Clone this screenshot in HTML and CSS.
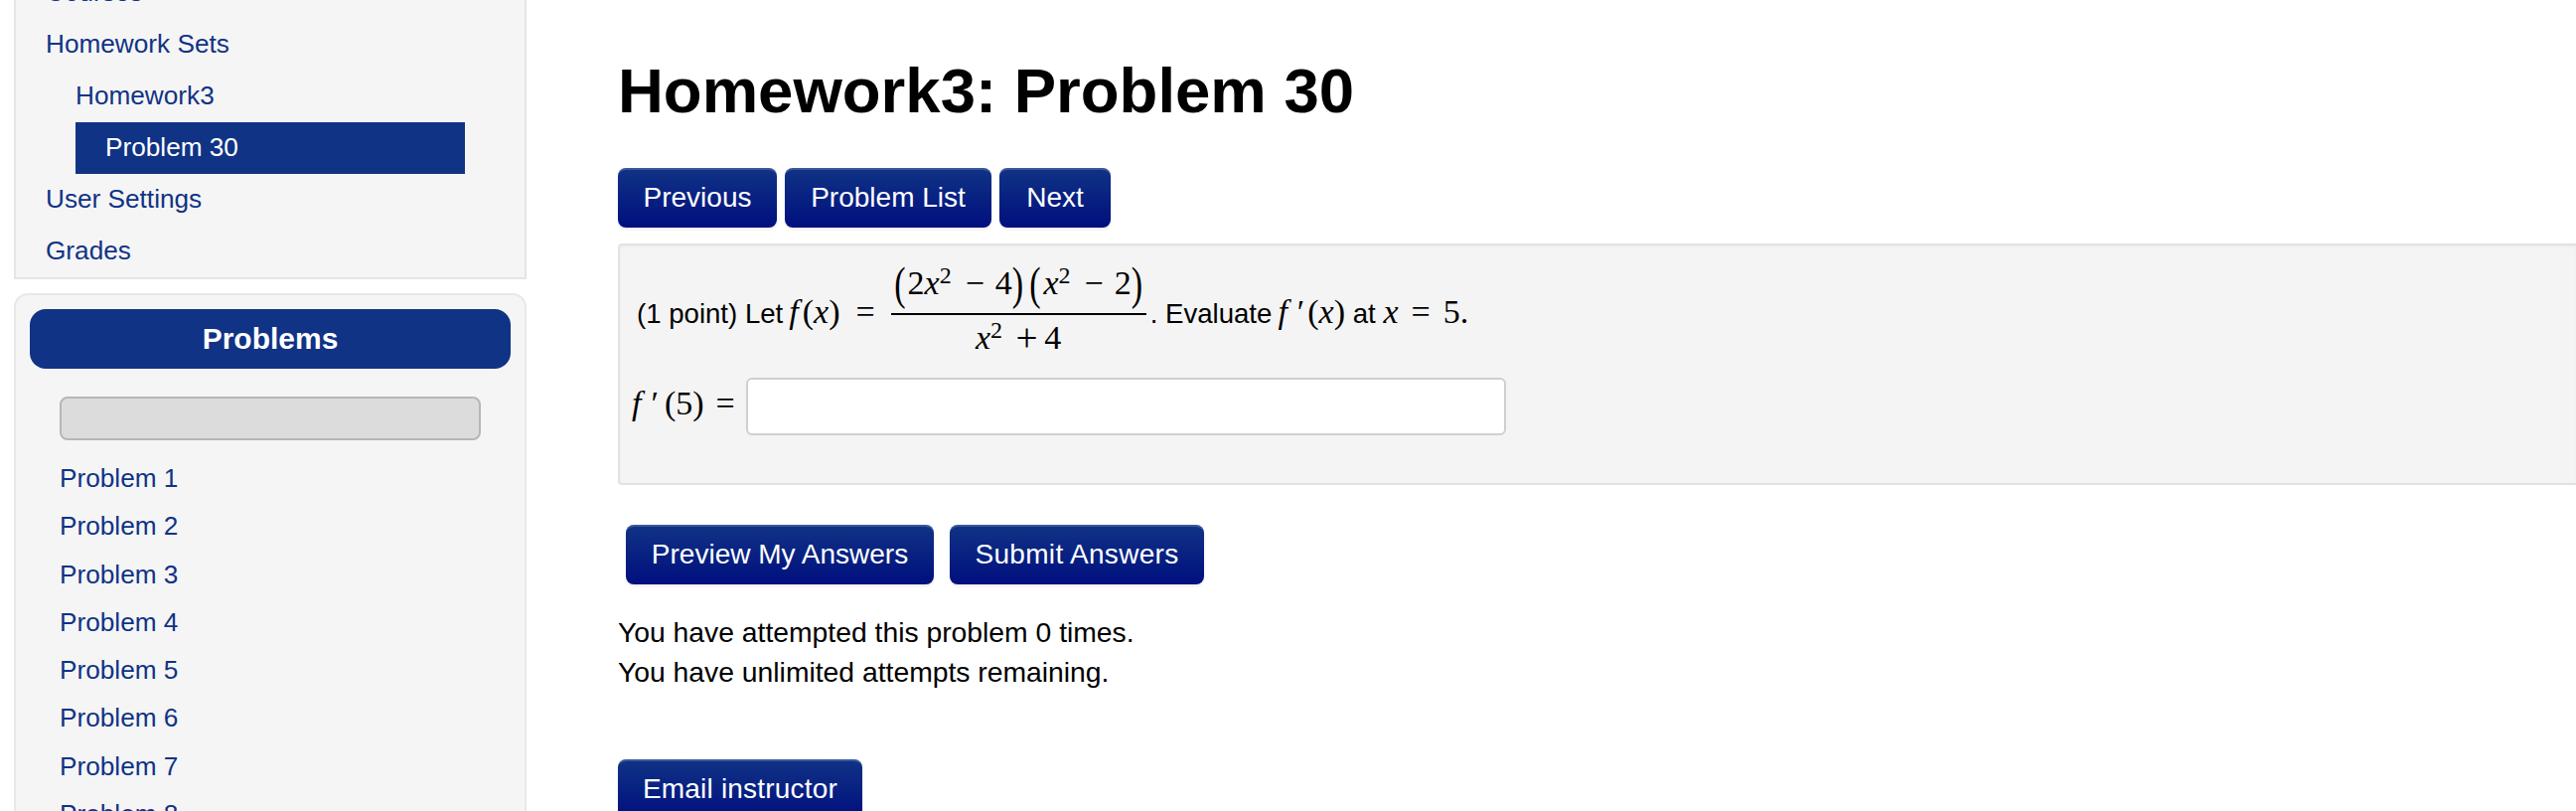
FILE: index.html
```html
<!DOCTYPE html>
<html lang="en">
<head>
<meta charset="utf-8">
<title>Homework3: Problem 30</title>
<link rel="stylesheet" href="styles.css">
</head>
<body>
<div class="page">
  <aside class="sidebar">
    <nav class="site-nav">
      <a class="nav-link" href="#">Courses</a>
      <a class="nav-link" href="#">Homework Sets</a>
      <a class="nav-link nav-sub" href="#">Homework3</a>
      <a class="nav-link nav-sub nav-active" href="#">Problem 30</a>
      <a class="nav-link" href="#">User Settings</a>
      <a class="nav-link" href="#">Grades</a>
    </nav>
    <section class="problems">
      <h2 class="problems-title">Problems</h2>
      <div class="progress"></div>
      <ul class="problem-list">
        <li><a href="#">Problem 1</a></li>
        <li><a href="#">Problem 2</a></li>
        <li><a href="#">Problem 3</a></li>
        <li><a href="#">Problem 4</a></li>
        <li><a href="#">Problem 5</a></li>
        <li><a href="#">Problem 6</a></li>
        <li><a href="#">Problem 7</a></li>
        <li><a href="#">Problem 8</a></li>
      </ul>
    </section>
  </aside>
  <main class="content">
    <h1 class="title">Homework3: Problem 30</h1>
    <div class="btn-row">
      <button class="btn btn-prev">Previous</button>
      <button class="btn btn-list">Problem List</button>
      <button class="btn btn-next">Next</button>
    </div>
    <div class="problem-box">
      <p class="statement">(1 point) Let<span class="math lead"><i class="fn">f</i>(<i>x</i>)<span class="rel">=</span></span><span class="frac"><span class="num"><span class="paren">(</span><span class="two">2</span><i>x</i><sup>2</sup><span class="bin">−</span>4<span class="paren">)</span><span class="paren paren-gap">(</span><i>x</i><sup>2</sup><span class="bin">−</span>2<span class="paren">)</span></span><span class="den"><i>x</i><sup>2</sup><span class="bin-plus">+</span>4</span></span>. Evaluate<span class="math lead"><i class="fn">f</i><span class="prime">′</span>(<i>x</i>)</span> at <span class="math"><i>x</i><span class="rel-both">=</span>5.</span></p>
      <div class="answer-row">
        <label class="math answer-label" for="answer"><i class="fn">f</i><span class="prime prime-wide">′</span>(5)<span class="rel-tight">=</span></label>
        <input class="answer" id="answer" type="text">
      </div>
    </div>
    <div class="btn-row submit-row">
      <button class="btn btn-preview">Preview My Answers</button>
      <button class="btn btn-submit">Submit Answers</button>
    </div>
    <p class="attempts">You have attempted this problem 0 times.<br>You have unlimited attempts remaining.</p>
    <button class="btn btn-email">Email instructor</button>
  </main>
</div>
</body>
</html>
```

FILE: styles.css
```css
html, body {
  margin: 0;
  height: 816px;
  overflow: hidden;
  background: #fff;
}
body {
  font-family: "Liberation Sans", Arial, sans-serif;
  font-size: 28px;
  color: #000;
}
a { text-decoration: none; color: #103385; }

.page {
  display: flex;
  align-items: flex-start;
  padding-left: 14px;
}

/* sidebar */
.sidebar {
  flex: 0 0 516px;
  margin-top: -35px;
}
.site-nav {
  display: flex;
  flex-direction: column;
  box-sizing: border-box;
  background: #f5f5f5;
  border: 2px solid #e5e5e5;
  padding: 0 60px 0 30px;
}
.nav-link {
  font-size: 26.2px;
  line-height: 50px;
  padding-bottom: 2px;
}
.nav-sub { margin-left: 30px; }
.nav-active {
  background: #103385;
  color: #fff;
  padding-left: 30px;
}
.problems {
  margin-top: 14px;
  box-sizing: border-box;
  background: #f5f5f5;
  border: 2px solid #e8e8e8;
  border-radius: 14px;
  padding: 14px;
}
.problems-title {
  margin: 0;
  height: 60px;
  line-height: 60px;
  text-align: center;
  background: #103385;
  color: #fff;
  font-size: 30px;
  font-weight: 700;
  border-radius: 16px;
}
.progress {
  box-sizing: border-box;
  height: 44px;
  margin: 28px 30px 14px;
  background: #dcdcdc;
  border: 2px solid #b6b6b6;
  border-radius: 8px;
}
.problem-list {
  list-style: none;
  margin: 0;
  padding: 0 0 0 30px;
}
.problem-list li {
  font-size: 26.2px;
  line-height: 48.3px;
}

/* main column */
.content {
  flex: 1 1 auto;
  min-width: 0;
  margin-left: 92px;
  padding-top: 56px;
}
.title {
  margin: 0 0 43px;
  font-size: 63.5px;
  line-height: 70px;
  font-weight: 700;
}
.btn-row {
  display: flex;
  gap: 8px;
}
.btn {
  box-sizing: border-box;
  height: 60px;
  padding: 0;
  font: 28px "Liberation Sans", Arial, sans-serif;
  color: #fff;
  background: linear-gradient(#103385, #000f7e);
  border: 0;
  border-radius: 8px;
  box-shadow: inset 0 3px 0 -1px rgba(255, 255, 255, .18), 0 2px 3px rgba(0, 0, 0, .08);
}
.btn-prev { width: 160px; }
.btn-list { width: 208px; }
.btn-next { width: 112px; }
.btn-preview { width: 310px; }
.btn-submit { width: 256px; letter-spacing: .3px; }
.btn-email { display: block; width: 246px; margin-top: 68px; letter-spacing: .2px; }

.problem-box {
  box-sizing: border-box;
  height: 243px;
  margin-top: 16px;
  padding: 18px 17px 0;
  background: #f4f4f4;
  border: 2px solid #e2e2e2;
  border-right: 0;
  border-radius: 4px 0 0 4px;
  box-shadow: inset 0 2px 3px rgba(0, 0, 0, .03);
}
.statement {
  margin: 0;
  font-size: 27.6px;
  line-height: 40px;
  white-space: nowrap;
}
.math {
  font-family: "Liberation Serif", "Times New Roman", serif;
  font-size: 34px;
}
.lead { margin-left: 6px; }
.fn { margin-right: 4px; }
.rel { margin-left: 16px; }
.rel-both { margin: 0 13px; }
.rel-tight { margin-left: 12px; }
.prime { margin: 0 3px 0 6px; }
.prime-wide { margin-right: 6px; }
.frac {
  display: inline-block;
  width: 257px;
  margin: 0 4px 0 16px;
  vertical-align: -26px;
  text-align: center;
  font-family: "Liberation Serif", "Times New Roman", serif;
  font-size: 34px;
}
.num, .den { display: block; line-height: 40px; }
.num {
  padding-bottom: 9.5px;
  border-bottom: 2px solid #000;
}
.den { padding-top: 3px; }
.bin { margin: 0 11px 0 14px; }
.bin-plus { display: inline-block; margin: 0 8px 0 15px; transform: scale(1.15); }
.two { margin-left: 2px; }
.paren {
  display: inline-block;
  transform: scale(1, 1.35);
  transform-origin: 50% 45%;
  font-weight: 400;
}
.paren-gap { margin: 0 3px 0 6px; }
sup {
  font-size: 24px;
  line-height: 0;
  vertical-align: 11px;
}
.answer-row {
  display: flex;
  align-items: center;
  margin-top: 20px;
  margin-left: -5px;
}
.answer-label {
  padding-bottom: 6px;
  margin-right: 11px;
  white-space: nowrap;
}
.answer {
  box-sizing: border-box;
  width: 765px;
  height: 58px;
  background: #fff;
  border: 2px solid #cfcfcf;
  border-radius: 6px;
  padding: 0 10px;
  font-size: 28px;
}
.submit-row {
  gap: 16px;
  margin: 40px 0 0 8px;
}
.attempts {
  margin: 28px 0 0;
  font-size: 28.3px;
  line-height: 40px;
}
```
